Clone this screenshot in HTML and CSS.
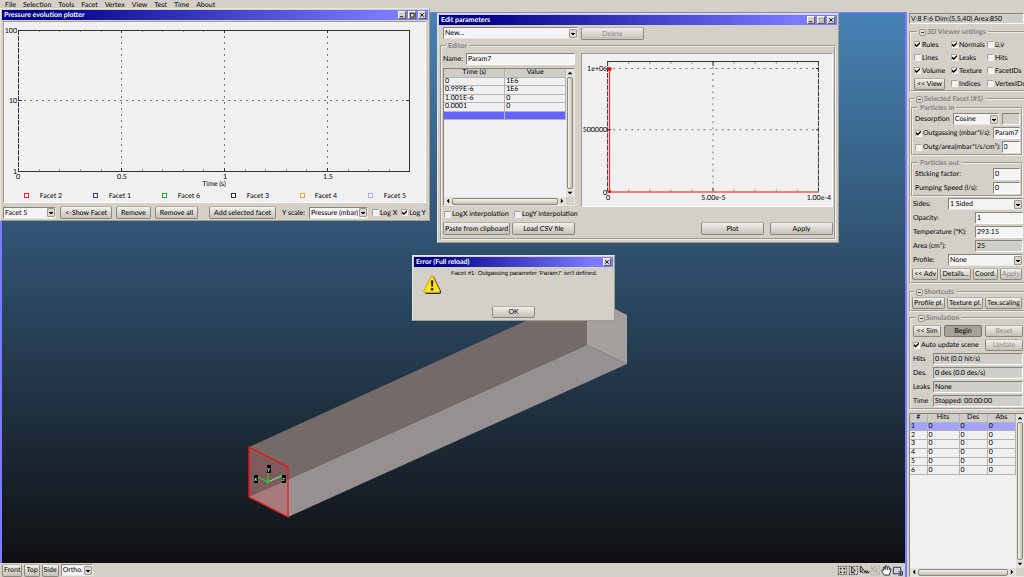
FILE: index.html
```
<!DOCTYPE html>
<html lang="en">
<head>
  <meta charset="UTF-8" />
  <meta name="viewport" content="width=device-width, initial-scale=1.0"/>
  <title>Molflow</title>
  <link rel="stylesheet" href="styles.css">
</head>
<body>
  <!-- Workspace -->
  <div class="main">
    <nav class="menubar">
      <a href="#">File</a>
      <a href="#">Selection</a>
      <a href="#">Tools</a>
      <a href="#">Facet</a>
      <a href="#">Vertex</a>
      <a href="#">View</a>
      <a href="#">Test</a>
      <a href="#">Time</a>
      <a href="#">About</a>
    </nav>

    <div class="desktop">
      <!-- 3D geometry -->
      <svg class="scene" viewBox="240 290 400 240">
        <polygon points="249,447 587,293 587,345 249,497" fill="#746a68"/>
        <polygon points="587,295 627,315 627,364 587,345" fill="#a5a09e"/>
        <polygon points="249,497 587,345 627,364 288,517" fill="#969090"/>
        <polygon points="249,447 288,467 288,480 249,497" fill="#7e5a5c"/>
        <polygon points="249,497 288,480 288,517" fill="#a77a7c"/>
        <polygon points="249,447 288,467 288,517 249,497" fill="none" stroke="#f01414" stroke-width="1.3"/>
        <path d="M268 482V471M268 482L256 476M268 482L282 476" fill="none" stroke="#1fe01f"/>
        <path d="M270 481L281 476" stroke="#8fd0c8"/>
        <circle cx="268" cy="482" r="1.3" fill="#1fe01f"/>
        <circle cx="281" cy="476" r="1.3" fill="#1fe01f"/>
        <g fill="#000"><rect x="267" y="465" width="4" height="8"/><rect x="254" y="475" width="4" height="8"/><rect x="282" y="475" width="4" height="8"/></g>
        <g class="axis-name"><text x="267" y="471">y</text><text x="254" y="481">x</text><text x="282" y="481">z</text></g>
      </svg>

      <!-- Pressure evolution plotter -->
      <section class="window plotter">
        <header class="titlebar">
          <h2>Pressure evolution plotter</h2>
          <button class="win-btn" aria-label="Minimize"><svg viewBox="0 0 7 7"><path d="M1 5.5H5"/></svg></button>
          <button class="win-btn" aria-label="Maximize"><svg viewBox="0 0 7 7"><path d="M1 1.5H6V6H1.5V1"/></svg></button>
          <button class="win-btn" aria-label="Close"><svg viewBox="0 0 7 7"><path d="M1.5 1.5L5.5 5.5M5.5 1.5L1.5 5.5"/></svg></button>
        </header>
        <div class="window-body">
          <div class="panel">
            <svg class="plot" viewBox="4 22 421 180">
              <path class="grid-line" d="M18 100.5H410M121.5 30V171M224.5 30V171M327.5 30V171"/>
              <path class="axis" d="M18 30.5H410M18 171.5H410M409.5 30V171"/>
              <path class="axis log" d="M18.5 30V171"/>
              <path class="axis" d="M18 100.5H22M406 100.5H410M121.5 30V33M121.5 168V171M224.5 30V33M224.5 168V171M327.5 30V33M327.5 168V171"/>
              <path class="minor" d="M39.5 31V32M59.5 31V32M80.5 31V32M101.5 31V32M142.5 31V32M162.5 31V32M183.5 31V32M203.5 31V32M39.5 169V171M59.5 169V171M80.5 169V171M101.5 169V171M142.5 169V171M162.5 169V171M183.5 169V171M203.5 169V171M245.5 169V171M265.5 169V171M286.5 169V171M306.5 169V171M348.5 169V171M368.5 169V171M389.5 169V171"/>
              <g text-anchor="end">
                <text x="17" y="33">100</text>
                <text x="17" y="103">10</text>
                <text x="17" y="174">1</text>
              </g>
              <g text-anchor="middle">
                <text x="18" y="179">0</text>
                <text x="122" y="179">0.5</text>
                <text x="225" y="179">1</text>
                <text x="328" y="179">1.5</text>
                <text x="214" y="186">Time (s)</text>
                <text x="51" y="198">Facet 2</text>
                <text x="120" y="198">Facet 1</text>
                <text x="189" y="198">Facet 6</text>
                <text x="258" y="198">Facet 3</text>
                <text x="326" y="198">Facet 4</text>
                <text x="395" y="198">Facet 5</text>
              </g>
              <g fill="#fff">
                <rect x="24.5" y="193.5" width="4" height="4" stroke="#f02020"/>
                <rect x="93.5" y="193.5" width="4" height="4" stroke="#2828e8"/>
                <rect x="162.5" y="193.5" width="4" height="4" stroke="#10b030"/>
                <rect x="231.5" y="193.5" width="4" height="4" stroke="#303030"/>
                <rect x="300.5" y="193.5" width="4" height="4" stroke="#f0a030"/>
                <rect x="368.5" y="193.5" width="4" height="4" stroke="#a8a8f8"/>
              </g>
            </svg>
          </div>
          <div class="plot-tools">
            <span class="combo facet-select"><select aria-label="Facet"><option>Facet 5</option></select></span>
            <button class="btn">&lt;-Show Facet</button>
            <button class="btn">Remove</button>
            <button class="btn">Remove all</button>
            <button class="btn add-btn">Add selected facet</button>
            <label class="scale-label" for="yscale">Y scale:</label>
            <span class="combo scale-select"><select id="yscale"><option>Pressure (mbar)</option></select></span>
            <label class="check"><input type="checkbox">Log X</label>
            <label class="check"><input type="checkbox" checked>Log Y</label>
          </div>
        </div>
      </section>

      <!-- Edit parameters -->
      <section class="window params">
        <header class="titlebar">
          <h2>Edit parameters</h2>
          <button class="win-btn" aria-label="Minimize"><svg viewBox="0 0 7 7"><path d="M1 5.5H5"/></svg></button>
          <button class="win-btn off" aria-label="Maximize"><svg viewBox="0 0 7 7"><path d="M1 1.5H6V6H1.5V1"/></svg></button>
          <button class="win-btn" aria-label="Close"><svg viewBox="0 0 7 7"><path d="M1.5 1.5L5.5 5.5M5.5 1.5L1.5 5.5"/></svg></button>
        </header>
        <div class="window-body">
          <div class="param-top">
            <span class="combo"><select aria-label="Parameter"><option>New...</option></select></span>
            <button class="btn wide" disabled>Delete</button>
          </div>
          <fieldset class="editor">
            <legend>Editor</legend>
            <div class="editor-grid">
              <div class="editor-left">
                <div class="name-row">
                  <label for="pname">Name:</label>
                  <input class="text" id="pname" type="text" value="Param7">
                </div>
                <div class="list">
                  <div class="list-view">
                    <table class="param-table">
                      <thead><tr><th>Time (s)</th><th>Value</th></tr></thead>
                      <tbody>
                        <tr><td>0</td><td>1E6</td></tr>
                        <tr><td>0.999E-6</td><td>1E6</td></tr>
                        <tr><td>1.001E-6</td><td>0</td></tr>
                        <tr><td>0.0001</td><td>0</td></tr>
                        <tr class="selected"><td></td><td></td></tr>
                      </tbody>
                    </table>
                  </div>
                  <div class="scroll-v"><i class="up"></i><b></b><i class="down"></i></div>
                  <div class="scroll-h"><i class="left"></i><b></b><i class="right"></i></div>
                </div>
                <div class="interp">
                  <label class="check"><input type="checkbox">LogX interpolation</label>
                  <label class="check"><input type="checkbox">LogY interpolation</label>
                </div>
                <div class="btn-row">
                  <button class="btn wide">Paste from clipboard</button>
                  <button class="btn wide">Load CSV file</button>
                </div>
              </div>
              <div class="editor-right">
                <div class="panel">
                  <svg class="plot" viewBox="582 54 249 151">
                    <path class="grid-line" d="M607 68.5H818M607 129.5H818M712.5 61V191"/>
                    <path class="axis" d="M607 61.5H818M712.5 61V66M712.5 188V191M607 129.5H611M815 129.5H818M815 68.5H818"/>
                    <path class="axis log" d="M607.5 61V191M817.5 61V191"/>
                    <path class="minor" d="M628.5 62V64M649.5 62V64M670.5 62V64M691.5 62V64M733.5 62V64M754.5 62V64M775.5 62V64M796.5 62V64M628.5 189V191M649.5 189V191M670.5 189V191M691.5 189V191M733.5 189V191M754.5 189V191M775.5 189V191M796.5 189V191"/>
                    <path class="curve" d="M607 191.5H818M609.5 191V69"/>
                    <circle cx="609.5" cy="69" r="2" fill="#f00"/>
                    <circle cx="609.5" cy="191" r="1.5" fill="#f00"/>
                    <g text-anchor="end">
                      <text x="607" y="71">1e+06</text>
                      <text x="607" y="132">500000</text>
                      <text x="607" y="194">0</text>
                    </g>
                    <g text-anchor="middle">
                      <text x="608" y="199">0</text>
                      <text x="713" y="199">5.00e-5</text>
                      <text x="818" y="199">1.00e-4</text>
                    </g>
                  </svg>
                </div>
                <div class="btn-row end">
                  <button class="btn wide">Plot</button>
                  <button class="btn wide">Apply</button>
                </div>
              </div>
            </div>
          </fieldset>
        </div>
      </section>

      <!-- Error dialog -->
      <section class="window error" role="alertdialog">
        <header class="titlebar">
          <h2>Error (Full reload)</h2>
          <button class="win-btn" aria-label="Close"><svg viewBox="0 0 7 7"><path d="M1.5 1.5L5.5 5.5M5.5 1.5L1.5 5.5"/></svg></button>
        </header>
        <div class="error-body">
          <svg class="warn" viewBox="0 0 18 19">
            <path d="M10.3 1.8L17.6 16.6Q17.8 18.3 16 18.3H2.5" fill="none" stroke="#202070" stroke-width="1.2"/>
            <path d="M8.3 1.2Q9.2 0.2 10 1.2L16.8 15.6Q17 17.3 15.6 17.4H1.8Q0.4 17 1 15.6Z" fill="#ffe410" stroke="#a09010" stroke-width=".7"/>
            <path d="M7.9 5.5H10.3L9.7 12H8.5Z" fill="#101010"/>
            <circle cx="9.1" cy="14.3" r="1.2" fill="#101010"/>
          </svg>
          <p>Facet #1: Outgassing parameter 'Param7' isn't defined.</p>
        </div>
        <button class="btn ok">OK</button>
      </section>
    </div>

    <!-- View bar -->
    <footer class="viewbar">
      <button class="btn">Front</button>
      <button class="btn">Top</button>
      <button class="btn">Side</button>
      <span class="combo"><select aria-label="Projection"><option>Ortho.</option></select></span>
      <div class="tools">
        <button aria-label="Select all"><svg viewBox="0 0 12 12"><path d="M1.5 1V11M10.5 1V11M1 1.5H11M1 10.5H11" stroke-dasharray="1 1"/><path d="M3 4H5M3 8H5M7 4H9M7 8H9M4 3V5M8 3V5M4 7V9M8 7V9"/></svg></button>
        <button aria-label="Select"><svg viewBox="0 0 12 12"><path d="M1.5 1V11M10.5 1V11M1 1.5H11M1 10.5H11" stroke-dasharray="1 1"/><path d="M4 2V9L5.8 7.5L7 10M4 2L8 6.5H6"/></svg></button>
        <button aria-label="Select vertex"><svg viewBox="0 0 12 12"><path d="M1.5 1V8L3 6.5L4 9M1.5 1L5 5.5H3M5.5 9L6.5 6L8 9L9 6L10 9L11.5 7"/></svg></button>
        <button class="off" aria-label="Zoom"><svg viewBox="0 0 12 12"><path d="M1.5 1V11M10.5 1V11M1 1.5H11M1 10.5H11" stroke-dasharray="1 1"/><circle cx="5" cy="5" r="2.3" fill="none"/><path d="M7 7L10 10"/></svg></button>
        <button class="hand" aria-label="Pan"><svg viewBox="0 0 12 12"><path d="M3.5 11L1 7V5.5L2.5 6V2.5L4 2L4.5 5L5 1L6.5 1L7 5L8 1.5L9.2 2.5V5.5L10.5 4L11 5L9 11Z"/></svg></button>
        <button class="blue" aria-label="Resize"><svg viewBox="0 0 12 12"><path d="M1.5 2.5H9.5V9.5H1.5ZM7 7.5H11.5M9.5 9V11.5M7 11H11.5V7"/></svg></button>
      </div>
    </footer>
  </div>

  <!-- Sidebar -->
  <aside class="sidebar">
    <input class="text info" type="text" readonly aria-label="Geometry" value="V:8 F:6 Dim:(5,5,40) Area:850">

    <fieldset class="viewer">
      <legend><i class="fold"></i>3D Viewer settings</legend>
      <label class="check"><input type="checkbox" checked>Rules</label>
      <label class="check"><input type="checkbox" checked>Normals</label>
      <label class="check"><input type="checkbox"><span><span class="vec">u</span>,<span class="vec">v</span></span></label>
      <label class="check"><input type="checkbox">Lines</label>
      <label class="check"><input type="checkbox" checked>Leaks</label>
      <label class="check"><input type="checkbox">Hits</label>
      <label class="check"><input type="checkbox" checked>Volume</label>
      <label class="check"><input type="checkbox" checked>Texture</label>
      <label class="check"><input type="checkbox">FacetIDs</label>
      <button class="btn">&lt;&lt; View</button>
      <label class="check"><input type="checkbox">Indices</label>
      <label class="check"><input type="checkbox">VertexIDs</label>
    </fieldset>

    <fieldset class="facet">
      <legend><i class="fold"></i>Selected Facet (#1)</legend>
      <fieldset class="inner">
        <legend>Particles in</legend>
        <div class="row">
          <label for="des">Desorption</label>
          <span class="combo des"><select id="des"><option>Cosine</option></select></span>
          <input class="text tiny off" type="text" aria-label="Exponent" disabled>
        </div>
        <div class="row">
          <label class="check"><input type="checkbox" checked>Outgassing (mbar*l/s):</label>
          <input class="text short" type="text" aria-label="Outgassing" value="Param7">
        </div>
        <div class="row">
          <label class="check"><input type="checkbox">Outg/area(mbar*l/s/cm²):</label>
          <input class="text short" type="text" aria-label="Outgassing per area" value="0">
        </div>
      </fieldset>
      <fieldset class="inner">
        <legend>Particles out</legend>
        <div class="row"><label for="stick">Sticking factor:</label><input class="text short" id="stick" type="text" value="0"></div>
        <div class="row"><label for="pump">Pumping Speed (l/s):</label><input class="text short" id="pump" type="text" value="0"></div>
      </fieldset>
      <div class="row pad"><label for="sides">Sides:</label><span class="combo long"><select id="sides"><option>1 Sided</option></select></span></div>
      <div class="row pad"><label for="opacity">Opacity:</label><input class="text mid" id="opacity" type="text" value="1"></div>
      <div class="row pad"><label for="temp">Temperature (°K):</label><input class="text mid" id="temp" type="text" value="293.15"></div>
      <div class="row pad"><label for="area">Area (cm²):</label><input class="text mid off" id="area" type="text" readonly value="25"></div>
      <div class="row pad"><label for="profile">Profile:</label><span class="combo long"><select id="profile"><option>None</option></select></span></div>
      <div class="row buttons">
        <button class="btn">&lt;&lt; Adv</button>
        <button class="btn">Details...</button>
        <button class="btn">Coord.</button>
        <button class="btn" disabled>Apply</button>
      </div>
    </fieldset>

    <fieldset class="shortcuts">
      <legend><i class="fold"></i>Shortcuts</legend>
      <div class="row buttons">
        <button class="btn">Profile pl.</button>
        <button class="btn">Texture pl.</button>
        <button class="btn">Tex.scaling</button>
      </div>
    </fieldset>

    <fieldset class="simulation">
      <legend><i class="fold"></i>Simulation</legend>
      <div class="row sim-buttons">
        <button class="btn">&lt;&lt; Sim</button>
        <button class="btn pressed">Begin</button>
        <button class="btn" disabled>Reset</button>
      </div>
      <div class="row">
        <label class="check"><input type="checkbox" checked>Auto update scene</label>
        <button class="btn update" disabled>Update</button>
      </div>
      <div class="row stat"><label for="hits">Hits</label><input class="text off" id="hits" type="text" readonly value="0 hit (0.0 hit/s)"></div>
      <div class="row stat"><label for="desv">Des.</label><input class="text off" id="desv" type="text" readonly value="0 des (0.0 des/s)"></div>
      <div class="row stat"><label for="leaks">Leaks</label><input class="text off" id="leaks" type="text" readonly value="None"></div>
      <div class="row stat"><label for="time">Time</label><input class="text off" id="time" type="text" readonly value="Stopped: 00:00:00"></div>
    </fieldset>

    <div class="list hits-list">
      <div class="list-view">
        <table class="hits-table">
          <thead><tr><th>#</th><th>Hits</th><th>Des</th><th>Abs</th></tr></thead>
          <tbody>
            <tr class="selected"><td>1</td><td>0</td><td>0</td><td>0</td></tr>
            <tr><td>2</td><td>0</td><td>0</td><td>0</td></tr>
            <tr><td>3</td><td>0</td><td>0</td><td>0</td></tr>
            <tr><td>4</td><td>0</td><td>0</td><td>0</td></tr>
            <tr><td>5</td><td>0</td><td>0</td><td>0</td></tr>
            <tr><td>6</td><td>0</td><td>0</td><td>0</td></tr>
          </tbody>
        </table>
      </div>
      <div class="scroll-v"><i class="up"></i><b></b><i class="down"></i></div>
      <div class="scroll-h"><i class="left"></i><b></b><i class="right"></i></div>
    </div>
  </aside>
</body>
</html>
```
FILE: styles.css
```
* {
  margin: 0;
  padding: 0;
  box-sizing: border-box;
}

body {
  display: grid;
  grid-template-columns: 1fr 117px;
  height: 100vh;
  overflow: hidden;
  background: #d4d0c8;
  color: #000;
}

body, button, input, select {
  font-family: Lato, "Liberation Sans", Arial, sans-serif;
  font-size: 7px;
  line-height: 8px;
  text-rendering: geometricPrecision;
}

/* Workspace */
.main {
  display: flex;
  flex-direction: column;
  min-width: 0;
  border-right: 2px solid #7b7bff;
}

.menubar {
  display: flex;
  gap: 7px;
  height: 12px;
  padding: 1px 5px;
  margin-right: -2px;
  background: #d4d0c8;
}

.menubar a {
  color: #000;
  text-decoration: none;
}

.desktop {
  position: relative;
  flex: 1;
  border-top: 1px solid #7b7bff;
  border-left: 2px solid #7b7bff;
  background: linear-gradient(#4682b4, #101012);
}

.scene {
  position: absolute;
  left: 238px;
  top: 277px;
  width: 400px;
}

.axis-name text {
  font-size: 6px;
  font-weight: bold;
  fill: #9fe8f0;
}

/* Windows */
.window {
  position: absolute;
  padding: 1px;
  background: #d4d0c8;
  border: 1px solid;
  border-color: #e8e6e0 #a09c90 #a09c90 #e8e6e0;
}

.plotter {
  left: -2px;
  top: -5px;
  width: 430px;
}

.params {
  left: 435px;
  top: 0;
  width: 402px;
}

.error {
  left: 410px;
  top: 242px;
  width: 203px;
  padding-bottom: 2px;
}

.titlebar {
  display: flex;
  align-items: center;
  gap: 2px;
  height: 10px;
  padding: 0 2px;
  background: linear-gradient(90deg, #00008a 10%, #7b7bff 90%);
}

.titlebar h2 {
  flex: 1;
  color: #fff;
  font-size: 7px;
  font-weight: bold;
}

.win-btn {
  width: 8px;
  height: 8px;
  background: #d4d0c8;
  border: 1px solid;
  border-color: #fff #606060 #606060 #fff;
}

.win-btn svg {
  display: block;
}

.win-btn path {
  fill: none;
  stroke: #000;
}

.win-btn.off path {
  stroke: #a0a0a0;
}

.window-body {
  padding: 2px 1px 1px;
}

.plotter .window-body {
  padding: 1px 2px 0 1px;
}

.panel {
  background: #f0f0f0;
  border: 1px solid;
  border-color: #a09c90 #fff #fff #a09c90;
}

.plot {
  display: block;
  width: 100%;
}

.plot text {
  font-size: 7px;
}

.grid-line {
  stroke: #777;
  stroke-dasharray: 2 4;
}

.axis {
  stroke: #333;
}

.log {
  stroke-dasharray: 5 1;
}

.minor {
  stroke: #999;
}

.curve {
  fill: none;
  stroke: #f01010;
}

.plot-tools {
  display: flex;
  align-items: center;
  gap: 4px;
  margin-top: 3px;
}

.facet-select {
  width: 67px;
}

.add-btn {
  margin-left: 7px;
}

.scale-label {
  margin-left: 2px;
  white-space: nowrap;
}

.scale-select {
  width: 60px;
}

/* Controls */
.btn {
  height: 13px;
  padding: 0 4px;
  color: #000;
  white-space: nowrap;
  background: linear-gradient(#f0efec, #c4c1b6);
  border: 1px solid #8c897c;
  border-top-color: #b4b1a6;
  border-radius: 2px;
}

.btn:disabled {
  color: #8c8c8c;
}

.btn.pressed {
  background: #a5a29a;
  border-color: #77746a;
}

.combo {
  display: flex;
  align-items: center;
  height: 12px;
  background: #f4f4f4;
  border: 1px solid;
  border-color: #87847a #e8e6e0 #e8e6e0 #87847a;
}

.combo select {
  flex: 1;
  min-width: 0;
  padding-left: 1px;
  appearance: none;
  background: none;
  border: 0;
}

.combo::after {
  content: "";
  width: 8px;
  height: 9px;
  background: linear-gradient(#000, #000) 1px 3px / 4px 1px no-repeat, linear-gradient(#000, #000) 2px 4px / 2px 1px no-repeat, #d8d5cc;
  border: 1px solid #9c998e;
  border-radius: 1px;
  box-sizing: border-box;
}

.text {
  min-width: 0;
  height: 12px;
  padding: 0 1px;
  color: #000;
  background: #f4f4f4;
  border: 1px solid;
  border-color: #87847a #fff #fff #87847a;
  border-radius: 1px;
}

.text.off, .text.info {
  background: #d0cec8;
}

.check {
  display: flex;
  align-items: center;
  gap: 1px;
  white-space: nowrap;
}

.check input {
  flex: none;
  width: 7px;
  height: 7px;
  appearance: none;
  background: #f0f0f0;
  border: 1px solid;
  border-color: #a8a599 #f4f4f4 #f4f4f4 #a8a599;
}

.check input:checked::before {
  content: "";
  display: block;
  width: 5px;
  height: 5px;
  background: #000;
  clip-path: polygon(0 30%, 35% 60%, 100% 0, 100% 35%, 35% 100%, 0 70%);
}

.vec {
  display: inline-block;
  line-height: 5px;
  border-top: 1px solid #999;
}

fieldset {
  min-width: 0;
  border: 2px groove #f0ede6;
}

legend {
  display: flex;
  align-items: center;
  gap: 1px;
  height: 8px;
  margin-left: 3px;
  padding: 0 2px;
  color: #808080;
  font-weight: bold;
}

.fold {
  width: 7px;
  height: 7px;
  background: linear-gradient(#444, #444) center / 3px 1px no-repeat, #dedbd3;
  border: 1px solid #9c998e;
  border-radius: 2px;
}

/* Lists with scrollbars */
.list {
  display: grid;
  grid-template-columns: 1fr 8px;
  grid-template-rows: 1fr 8px;
  border: 1px solid;
  border-color: #87847a #e8e6e0 #e8e6e0 #87847a;
}

.list-view {
  background: #f0f0f0;
}

table {
  width: 100%;
  table-layout: fixed;
  border-collapse: collapse;
}

th, td {
  height: 8px;
  line-height: 7px;
  border-right: 1px solid #b4b4b4;
  border-bottom: 1px solid #b4b4b4;
}

th {
  background: #cfcdc8;
  font-weight: normal;
}

td {
  padding-left: 1px;
  text-align: left;
}

.param-table {
  height: 51px;
}

.param-table .selected {
  background: #6363ff;
}

.hits-table {
  height: 61px;
}

.hits-table .selected {
  background: #a3a3ff;
}

.hits-table th:first-child {
  width: 17px;
}

.hits-table th:nth-child(2) {
  width: 32px;
}

.scroll-v, .scroll-h {
  display: flex;
  align-items: center;
  background: #e4e2dc;
}

.scroll-v {
  flex-direction: column;
}

.scroll-h {
  grid-column: 1;
}

.scroll-v b, .scroll-h b {
  flex: 1;
  border: 1px solid #8c897c;
  border-radius: 2px;
}

.scroll-v b {
  width: 6px;
  background: linear-gradient(90deg, #f4f3ee, #c4c1b0);
}

.scroll-h b {
  height: 7px;
  background: linear-gradient(#f4f3ee, #c4c1b0);
}

.scroll-v i, .scroll-h i {
  width: 8px;
  height: 8px;
  background: #000;
}

.up {
  clip-path: polygon(50% 35%, 80% 65%, 20% 65%);
}

.down {
  clip-path: polygon(20% 35%, 80% 35%, 50% 65%);
}

.left {
  clip-path: polygon(35% 50%, 65% 20%, 65% 80%);
}

.right {
  clip-path: polygon(35% 20%, 65% 50%, 35% 80%);
}

/* Edit parameters */
.param-top {
  display: flex;
  gap: 3px;
  padding-left: 3px;
}

.param-top .combo {
  width: 135px;
}

.wide {
  min-width: 63px;
}

.editor {
  margin-top: 2px;
  padding: 3px 1px 3px 1px;
}

.editor-grid {
  display: grid;
  grid-template-columns: 132px 1fr;
  gap: 6px;
}

.editor-left, .editor-right {
  display: flex;
  flex-direction: column;
  justify-content: space-between;
}

.name-row {
  display: flex;
  align-items: center;
  gap: 4px;
}

.name-row label {
  width: 19px;
}

.name-row .text {
  flex: 1;
}

.editor-left .list {
  height: 138px;
  margin-top: 3px;
}

.interp {
  display: grid;
  grid-template-columns: 1fr 60px;
  gap: 1px;
  margin: 4px 1px;
}

.btn-row {
  display: flex;
  justify-content: space-between;
}

.btn-row .btn {
  padding: 0 1px;
}

.btn-row.end {
  justify-content: flex-end;
  gap: 6px;
}

/* Error dialog */
.error-body {
  display: flex;
  gap: 10px;
  height: 39px;
  padding: 3px 9px;
  font-family: "Liberation Sans", Arial, sans-serif;
  font-size: 6px;
  white-space: nowrap;
}

.warn {
  flex: none;
  width: 18px;
  height: 19px;
  margin-top: 5px;
}

.ok {
  display: block;
  width: 43px;
  height: 12px;
  margin: 0 auto;
}

/* View bar */
.viewbar {
  display: flex;
  align-items: center;
  gap: 2px;
  height: 14px;
  padding: 0 2px;
  background: #d4d0c8;
}

.viewbar .btn {
  padding: 0 1px;
}

.viewbar .combo {
  width: 32px;
}

.tools {
  display: flex;
  margin-left: auto;
}

.tools button {
  width: 11px;
  height: 12px;
  background: #d4d0c8;
  border: 0;
}

.tools svg {
  display: block;
  width: 11px;
}

.tools path, .tools circle {
  fill: none;
  stroke: #222;
}

.tools .off path, .tools .off circle {
  stroke: #a5a29a;
}

.tools .hand path {
  fill: #fff;
}

.tools .blue path {
  stroke: #24246c;
}

/* Sidebar */
.sidebar {
  display: flex;
  flex-direction: column;
  padding: 13px 0 0 2px;
  overflow: hidden;
}

.sidebar > .text {
  height: 11px;
}

/* group frames run past the window edge */
.sidebar > fieldset {
  margin-right: -6px;
  padding-right: 5px;
}

.viewer {
  display: grid;
  grid-template-columns: 37px 36px 1fr;
  grid-auto-rows: 13px;
  align-items: center;
  margin-top: 4px;
  padding: 2px 0 0 3px;
}

.viewer .btn {
  height: 12px;
  width: 31px;
  padding: 0;
}

.facet {
  margin-top: 3px;
  padding: 1px 0;
}

.inner {
  padding: 0 1px 0 2px;
}

.inner + .inner {
  margin-top: 3px;
}

.row {
  display: flex;
  align-items: center;
  justify-content: space-between;
  height: 14px;
  gap: 1px;
}

.row.pad {
  padding-left: 2px;
}

.short {
  width: 27px;
}

.mid {
  width: 48px;
}

.tiny {
  width: 18px;
}

.des {
  width: 46px;
}

.long {
  width: 75px;
}

.row.buttons {
  gap: 2px;
  padding: 0 1px;
}

.row .btn {
  height: 12px;
}

.buttons .btn {
  flex: 1 1 auto;
  padding: 0 1px;
}

.shortcuts {
  margin-top: 4px;
}

.simulation {
  margin-top: 2px;
  padding: 2px 0 0 2px;
}

.sim-buttons {
  display: grid;
  grid-template-columns: 28px 38px 38px;
  gap: 3px;
}

.sim-buttons .btn {
  padding: 0;
}

.update {
  width: 38px;
}

.stat {
  gap: 3px;
}

.stat label {
  width: 17px;
}

.stat .text {
  flex: 1;
}

.hits-list {
  flex: 1;
  margin-top: 3px;
  margin-right: -1px;
}
```
